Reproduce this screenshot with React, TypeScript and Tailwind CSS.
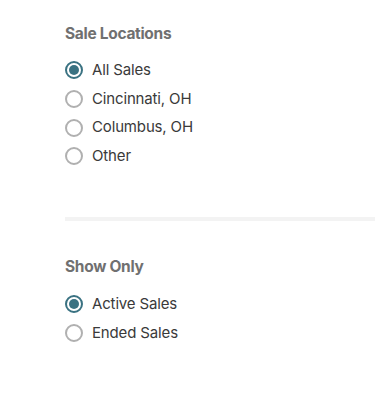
import { useState } from "react";

const LOCATIONS = ["All Sales", "Cincinnati, OH", "Columbus, OH", "Other"];
const SHOW_ONLY = ["Active Sales", "Ended Sales"];

function Radio({ label, checked, onSelect }: { label: string; checked: boolean; onSelect: () => void }) {
  return (
    <label className="flex h-[28.7px] cursor-pointer items-center gap-[9px]" onClick={onSelect}>
      <span
        className={`flex h-[18px] w-[18px] shrink-0 items-center justify-center rounded-full border-2 ${
          checked ? "border-[#3a7282]" : "border-[#b0b0b0]"
        }`}
      >
        {checked && <span className="h-[10px] w-[10px] rounded-full bg-[#3a7282]" />}
      </span>
      <span className="text-[15px] tracking-[-0.15px] text-[#3a3a3a]">{label}</span>
    </label>
  );
}

export default function App() {
  const [location, setLocation] = useState("All Sales");
  const [show, setShow] = useState("Active Sales");

  return (
    <div className="h-[393px] w-[375px] overflow-hidden bg-white pl-[65px] font-['Inter',sans-serif]">
      {/* Sale locations */}
      <div className="pt-[24px]">
        <h3 className="text-[15.5px] font-bold leading-[20px] tracking-[-0.3px] text-[#707070]">Sale Locations</h3>
        <div className="mt-[12px] flex flex-col">
          {LOCATIONS.map((l) => (
            <Radio key={l} label={l} checked={location === l} onSelect={() => setLocation(l)} />
          ))}
        </div>
      </div>

      <div className="mt-[46px] h-[4px] bg-[#f3f3f3]" />

      {/* Show only */}
      <div className="pt-[36px]">
        <h3 className="text-[15.5px] font-bold leading-[20px] tracking-[-0.3px] text-[#707070]">Show Only</h3>
        <div className="mt-[13px] flex flex-col">
          {SHOW_ONLY.map((s) => (
            <Radio key={s} label={s} checked={show === s} onSelect={() => setShow(s)} />
          ))}
        </div>
      </div>
    </div>
  );
}
